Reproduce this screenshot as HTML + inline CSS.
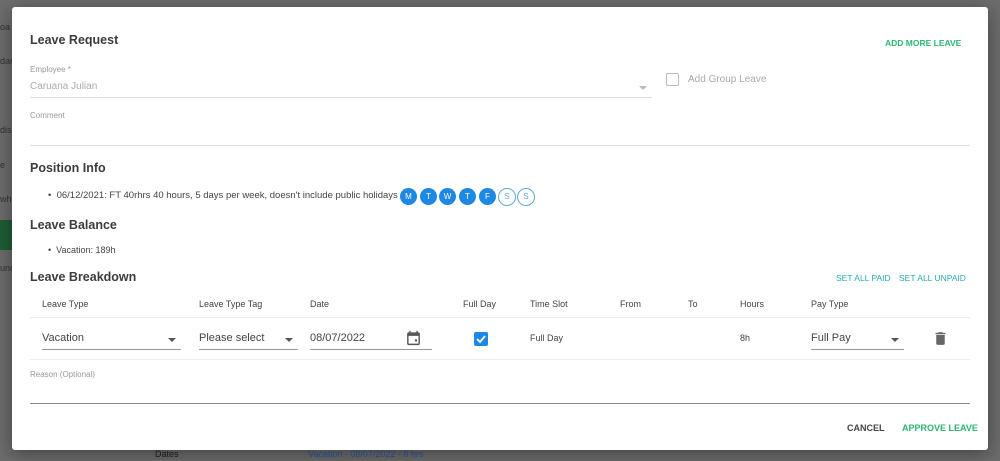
<!DOCTYPE html>
<html><head><style>
body{margin:0;width:1000px;height:461px;background:#6d6d6d;position:relative;overflow:hidden;font-family:"Liberation Sans",sans-serif;}
.a{position:absolute;white-space:nowrap;}
.m{position:absolute;left:12px;top:7px;width:976px;height:443px;background:#fff;border-radius:3px;box-shadow:0 4px 20px rgba(0,0,0,.4);}
.t{font-size:12.5px;font-weight:bold;color:#3c3c3c;}
.sm{font-size:8px;color:#999;}
.g{color:#2bb673;font-weight:bold;font-size:9px;}
.th{font-size:9px;color:#444;}
.c{position:absolute;top:188px;width:17px;height:17px;border-radius:50%;background:#1e88e5;color:#fff;font-size:8px;text-align:center;line-height:17px;}
.o{background:#fff;border:1px solid #62a8d8;color:#62a8d8;width:16px;height:16px;line-height:16px}
.ln{position:absolute;height:1px;background:#888;}
.arr{position:absolute;width:0;height:0;border-left:4px solid transparent;border-right:4px solid transparent;border-top:4px solid #555;}
</style></head><body>
<div class="a" style="left:0;top:22px;font-size:9px;color:#333">oa</div>
<div class="a" style="left:0;top:56px;font-size:9px;color:#333">dar</div>
<div class="a" style="left:0;top:125px;font-size:9px;color:#333">dis</div>
<div class="a" style="left:0;top:160px;font-size:9px;color:#333">e</div>
<div class="a" style="left:0;top:194px;font-size:9px;color:#333">wh</div>
<div style="position:absolute;left:0;top:220px;width:12px;height:30px;background:#1e5e36"></div>
<div class="a" style="left:0;top:263px;font-size:9px;color:#333">unc</div>
<div class="a" style="left:155px;top:449px;font-size:9px;color:#222">Dates</div>
<div class="a" style="left:308px;top:449px;font-size:9px;color:#2a5aa0">Vacation - 08/07/2022 - 8 hrs</div>
<div class="m"></div>
<div class="a t" style="left:30px;top:33px">Leave Request</div>
<div class="a g" style="left:885px;top:38px;font-size:8.5px">ADD MORE LEAVE</div>
<div class="a sm" style="left:30px;top:65px">Employee *</div>
<div class="a" style="left:30px;top:81px;font-size:10px;color:#aaa">Caruana Julian</div>
<div class="arr" style="left:639px;top:86px;border-top-color:#bbb"></div>
<div class="ln" style="left:30px;top:97px;width:622px;background:#ddd"></div>
<div style="position:absolute;left:666px;top:73px;width:11px;height:11px;border:1.5px solid #bbb;border-radius:2px"></div>
<div class="a" style="left:688px;top:74px;font-size:10px;color:#aaa">Add Group Leave</div>
<div class="a sm" style="left:30px;top:111px">Comment</div>
<div class="ln" style="left:30px;top:145px;width:940px;background:#ddd"></div>
<div class="a t" style="left:30px;top:161px">Position Info</div>
<div class="a" style="left:48px;top:190px;font-size:9.5px;color:#444">•&nbsp; 06/12/2021: FT 40rhrs 40 hours, 5 days per week, doesn't include public holidays</div>
<div class="c" style="left:400px">M</div><div class="c" style="left:420px">T</div><div class="c" style="left:439px">W</div><div class="c" style="left:459px">T</div><div class="c" style="left:479px">F</div><div class="c o" style="left:498px">S</div><div class="c o" style="left:517px">S</div>
<div class="a t" style="left:30px;top:218px">Leave Balance</div>
<div class="a" style="left:48px;top:245px;font-size:9px;color:#444">•&nbsp; Vacation: 189h</div>
<div class="a t" style="left:30px;top:270px">Leave Breakdown</div>
<div class="a" style="left:836px;top:273px;color:#2aa8b8;font-size:8.5px">SET ALL PAID</div>
<div class="a" style="left:899px;top:273px;color:#2aa8b8;font-size:8.5px">SET ALL UNPAID</div>
<div class="a th" style="left:42px;top:299px">Leave Type</div>
<div class="a th" style="left:199px;top:299px">Leave Type Tag</div>
<div class="a th" style="left:310px;top:299px">Date</div>
<div class="a th" style="left:463px;top:299px">Full Day</div>
<div class="a th" style="left:530px;top:299px">Time Slot</div>
<div class="a th" style="left:620px;top:299px">From</div>
<div class="a th" style="left:688px;top:299px">To</div>
<div class="a th" style="left:740px;top:299px">Hours</div>
<div class="a th" style="left:811px;top:299px">Pay Type</div>
<div class="ln" style="left:30px;top:317px;width:940px;background:#eee"></div>
<div class="a" style="left:42px;top:332px;font-size:11px;color:#444">Vacation</div>
<div class="arr" style="left:168px;top:338px"></div>
<div class="ln" style="left:42px;top:349px;width:139px;background:#999"></div>
<div class="a" style="left:199px;top:332px;font-size:11px;color:#444">Please select</div>
<div class="arr" style="left:285px;top:338px"></div>
<div class="ln" style="left:199px;top:349px;width:99px;background:#999"></div>
<div class="a" style="left:310px;top:332px;font-size:11px;color:#444">08/07/2022</div>
<svg style="position:absolute;left:405px;top:329px" width="17" height="18" viewBox="0 0 24 24"><path fill="#555" d="M19 4h-1V2h-2v2H8V2H6v2H5c-1.1 0-2 .9-2 2v14c0 1.1.9 2 2 2h14c1.1 0 2-.9 2-2V6c0-1.1-.9-2-2-2zm0 16H5V9h14v11zm-5-6h3v3h-3z"/></svg>
<div class="ln" style="left:310px;top:349px;width:122px;background:#999"></div>
<div style="position:absolute;left:474px;top:332px;width:14px;height:14px;background:#1e88e5;border-radius:2px"><svg width="14" height="14" viewBox="0 0 14 14"><path d="M3 7l3 3 5-6" stroke="#fff" stroke-width="1.8" fill="none"/></svg></div>
<div class="a" style="left:530px;top:333px;font-size:9px;color:#444">Full Day</div>
<div class="a" style="left:740px;top:333px;font-size:9px;color:#444">8h</div>
<div class="a" style="left:811px;top:332px;font-size:11px;color:#444">Full Pay</div>
<div class="arr" style="left:891px;top:338px"></div>
<div class="ln" style="left:811px;top:349px;width:93px;background:#999"></div>
<svg style="position:absolute;left:932px;top:329px" width="17" height="19" viewBox="0 0 24 24"><path fill="#666" d="M6 19c0 1.1.9 2 2 2h8c1.1 0 2-.9 2-2V7H6v12zM19 4h-3.5l-1-1h-5l-1 1H5v2h14V4z"/></svg>
<div class="ln" style="left:30px;top:359px;width:940px;background:#eee"></div>
<div class="a sm" style="left:30px;top:370px">Reason (Optional)</div>
<div class="ln" style="left:30px;top:403px;width:940px;background:#888"></div>
<div class="a" style="left:847px;top:423px;font-size:9px;color:#444;font-weight:bold">CANCEL</div>
<div class="a g" style="left:902px;top:423px;font-size:9px">APPROVE LEAVE</div>
</body></html>
